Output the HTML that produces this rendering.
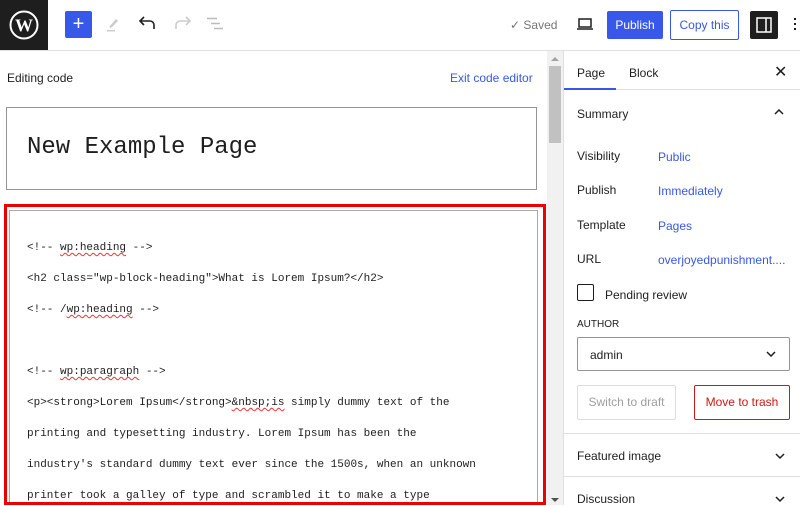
<!DOCTYPE html>
<html><head><style>
*{box-sizing:border-box;margin:0;padding:0}
body{width:800px;height:505px;overflow:hidden;background:#fff;font-family:"Liberation Sans",sans-serif;color:#1e1e1e;position:relative;font-size:12px}
.a{position:absolute}
.mono{font-family:"Liberation Mono",monospace;color:#1e1e1e}
.lnk{color:#3858e9}
.lab{font-size:12px;color:#1e1e1e}
.sq{text-decoration:underline wavy #e33;text-underline-offset:2px;text-decoration-thickness:1px}
</style></head><body>
<div class="a" style="left:0;top:0;width:48px;height:51px;background:#1e1e1e"></div>
<svg class="a" style="left:9px;top:10px" width="30" height="30" viewBox="0 0 30 30"><circle cx="15" cy="15" r="13.5" fill="none" stroke="#fff" stroke-width="2"/><text x="15" y="21.5" text-anchor="middle" font-family="Liberation Serif" font-weight="bold" font-size="18" fill="#fff">W</text></svg>
<div class="a" style="left:0;top:50px;width:800px;height:1px;background:#e0e0e0"></div>
<div class="a" style="left:65px;top:11px;width:27px;height:27px;background:#3858e9;border-radius:2px;color:#fff;font-size:20px;text-align:center;line-height:26px">+</div>
<svg class="a" style="left:105px;top:15px" width="18" height="18" viewBox="0 0 18 18"><path d="M4 12 L11 4 L13 6 L6 13 Z" fill="#ccc"/><rect x="2" y="15" width="8" height="1.5" fill="#ccc"/></svg>
<svg class="a" style="left:138px;top:15px" width="20" height="18" viewBox="0 0 20 18"><path d="M3 6 H12 a4 4 0 0 1 4 4 V14 M6 2 L2 6 L6 10" fill="none" stroke="#1e1e1e" stroke-width="1.6"/></svg>
<svg class="a" style="left:172px;top:15px" width="20" height="18" viewBox="0 0 20 18"><path d="M17 6 H8 a4 4 0 0 0 -4 4 V14 M14 2 L18 6 L14 10" fill="none" stroke="#ccc" stroke-width="1.6"/></svg>
<svg class="a" style="left:206px;top:17px" width="18" height="14" viewBox="0 0 18 14"><path d="M1 1.5H11M5 6.5H14M8 11.5H17" stroke="#bbb" stroke-width="1.5"/></svg>
<div class="a" style="left:510px;top:18px;font-size:12px;color:#757575">✓ Saved</div>
<svg class="a" style="left:576px;top:17px" width="18" height="14" viewBox="0 0 18 14"><rect x="3" y="2" width="12" height="8" fill="none" stroke="#1e1e1e" stroke-width="1.5"/><path d="M1 12H17" stroke="#1e1e1e" stroke-width="1.5"/></svg>
<div class="a" style="left:607px;top:11px;width:56px;height:28px;background:#3858e9;color:#fff;border-radius:2px;font-size:12px;text-align:center;line-height:28px">Publish</div>
<div class="a" style="left:670px;top:10px;width:69px;height:30px;border:1px solid #3858e9;color:#3858e9;border-radius:2px;font-size:12px;text-align:center;line-height:28px">Copy this</div>
<div class="a" style="left:750px;top:11px;width:28px;height:28px;background:#1e1e1e;border-radius:2px"></div>
<svg class="a" style="left:756px;top:17px" width="16" height="16" viewBox="0 0 16 16"><rect x="1" y="1" width="14" height="14" fill="none" stroke="#fff" stroke-width="1.5"/><path d="M10 1V15" stroke="#fff" stroke-width="1.5"/></svg>
<div class="a" style="left:794px;top:18px;width:2px;height:2px;background:#1e1e1e;box-shadow:0 5px #1e1e1e,0 10px #1e1e1e"></div>
<div class="a" style="left:7px;top:71px;font-size:12px;color:#1e1e1e">Editing code</div>
<div class="a lnk" style="left:450px;top:71px;font-size:12px">Exit code editor</div>
<div class="a" style="left:6px;top:107px;width:531px;height:83px;border:1px solid #949494"></div>
<div class="a mono" style="left:27px;top:132px;font-size:24px;line-height:32px">New Example Page</div>
<div class="a" style="left:4px;top:204px;width:542px;height:301px;border:3px solid #e00"></div>
<div class="a" style="left:9px;top:210px;width:529px;height:292px;border:1px solid #aaa;border-bottom:none"></div>
<div class="a mono" style="left:27px;top:233px;font-size:11px;line-height:31px;white-space:pre;height:269px;overflow:hidden">&lt;!-- <span class="sq">wp:heading</span> --&gt;
&lt;h2 class="wp-block-heading"&gt;What is Lorem Ipsum?&lt;/h2&gt;
&lt;!-- /<span class="sq">wp:heading</span> --&gt;

&lt;!-- <span class="sq">wp:paragraph</span> --&gt;
&lt;p&gt;&lt;strong&gt;Lorem Ipsum&lt;/strong&gt;<span class="sq">&amp;nbsp;is</span> simply dummy text of the
printing and typesetting industry. Lorem Ipsum has been the
industry's standard dummy text ever since the 1500s, when an unknown
printer took a galley of type and scrambled it to make a type</div>
<div class="a" style="left:547px;top:51px;width:16px;height:454px;background:#f1f1f1"></div>
<div class="a" style="left:549px;top:66px;width:12px;height:77px;background:#c1c1c1"></div>
<div class="a" style="left:551px;top:57px;width:0;height:0;border:4px solid transparent;border-bottom-color:#a3a3a3;border-top:none"></div>
<div class="a" style="left:551px;top:498px;width:0;height:0;border:4px solid transparent;border-top-color:#505050;border-bottom:none"></div>
<div class="a" style="left:563px;top:51px;width:1px;height:454px;background:#e0e0e0"></div>
<div class="a" style="left:577px;top:66px;font-size:12px">Page</div>
<div class="a" style="left:629px;top:66px;font-size:12px">Block</div>
<div class="a" style="left:774px;top:62px;font-size:16px">✕</div>
<div class="a" style="left:564px;top:89px;width:236px;height:1px;background:#e0e0e0"></div>
<div class="a" style="left:564px;top:88px;width:52px;height:2px;background:#3858e9"></div>
<div class="a" style="left:577px;top:107px;font-size:12px">Summary</div>
<svg class="a" style="left:773px;top:108px" width="12" height="8" viewBox="0 0 12 8"><path d="M2 6L6 2L10 6" fill="none" stroke="#1e1e1e" stroke-width="1.5"/></svg>
<div class="a lab" style="left:577px;top:149px">Visibility</div><div class="a lnk" style="left:658px;top:150px">Public</div>
<div class="a lab" style="left:577px;top:183px">Publish</div><div class="a lnk" style="left:658px;top:184px">Immediately</div>
<div class="a lab" style="left:577px;top:218px">Template</div><div class="a lnk" style="left:658px;top:219px">Pages</div>
<div class="a lab" style="left:577px;top:252px">URL</div><div class="a lnk" style="left:658px;top:253px">overjoyedpunishment....</div>
<div class="a" style="left:577px;top:284px;width:17px;height:17px;border:1px solid #1e1e1e;border-radius:2px"></div>
<div class="a lab" style="left:605px;top:288px">Pending review</div>
<div class="a" style="left:577px;top:319px;font-size:10px">AUTHOR</div>
<div class="a" style="left:577px;top:337px;width:213px;height:34px;border:1px solid #949494;border-radius:2px"></div>
<div class="a lab" style="left:590px;top:348px">admin</div>
<svg class="a" style="left:766px;top:351px" width="10" height="6" viewBox="0 0 10 6"><path d="M1 1L5 5L9 1" fill="none" stroke="#1e1e1e" stroke-width="1.5"/></svg>
<div class="a" style="left:577px;top:385px;width:99px;height:35px;border:1px solid #ddd;border-radius:2px;color:#a0a0a0;text-align:center;line-height:33px">Switch to draft</div>
<div class="a" style="left:694px;top:385px;width:96px;height:35px;border:1px solid #cc1818;border-radius:2px;color:#cc1818;text-align:center;line-height:33px">Move to trash</div>
<div class="a" style="left:564px;top:433px;width:236px;height:1px;background:#e0e0e0"></div>
<div class="a" style="left:577px;top:449px;font-size:12px">Featured image</div>
<svg class="a" style="left:774px;top:452px" width="12" height="8" viewBox="0 0 12 8"><path d="M2 2L6 6L10 2" fill="none" stroke="#1e1e1e" stroke-width="1.5"/></svg>
<div class="a" style="left:564px;top:476px;width:236px;height:1px;background:#e0e0e0"></div>
<div class="a" style="left:577px;top:492px;font-size:12px">Discussion</div>
<svg class="a" style="left:774px;top:495px" width="12" height="8" viewBox="0 0 12 8"><path d="M2 2L6 6L10 2" fill="none" stroke="#1e1e1e" stroke-width="1.5"/></svg>
</body></html>
